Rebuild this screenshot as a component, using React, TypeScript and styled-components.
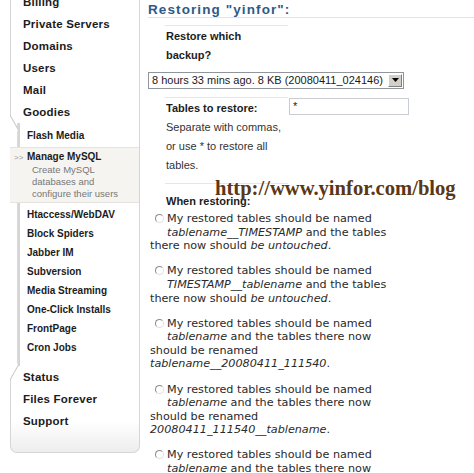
import React from "react";
import styled, { createGlobalStyle } from "styled-components";

const GlobalStyle = createGlobalStyle`
  html, body {
    margin: 0;
    padding: 0;
    background: #fff;
  }
  body {
    font-family: "Liberation Sans", Arial, sans-serif;
    color: #222;
    overflow: hidden;
  }
`;

const Page = styled.div`
  position: relative;
  display: flex;
  align-items: flex-start;
  width: 474px;
  height: 473px;
  overflow: hidden;
`;

const Sidebar = styled.nav`
  flex-shrink: 0;
  width: 128px;
  margin: -9px 0 0 10px;
  padding-bottom: 20px;
  border: 1px solid #d6d6d6;
  border-top: none;
  border-radius: 0 0 7px 7px;
  background: linear-gradient(to bottom, #fff 0, #fff 430px, #ededed 100%);
`;

const MainItem = styled.div`
  height: 22px;
  line-height: 22px;
  padding-left: 12px;
  font-size: 11.5px;
  font-weight: bold;
  letter-spacing: 0.2px;
  color: #1c1c1c;
  white-space: nowrap;
`;

const SubGroup = styled.div`
  position: relative;
  margin-left: -1px;
  padding: 3px 0 9px 17px;
  background: linear-gradient(to right, #fff 7px, #dcdcdc 7px, #d2d2d2 10px, #fff 10px);

  &::before {
    content: "";
    position: absolute;
    left: 0;
    top: -8px;
    width: 9px;
    height: 16px;
    background: linear-gradient(to bottom left, transparent calc(50% - 1px), #c8c8c8 50%, #fff calc(50% + 1px));
  }

  &::after {
    content: "";
    position: absolute;
    left: 0;
    top: calc(100% - 2px);
    width: 9px;
    height: 16px;
    background: linear-gradient(to bottom right, #fff calc(50% - 1px), #c8c8c8 50%, transparent calc(50% + 1px));
  }
`;

const SubItem = styled.div`
  height: 19px;
  line-height: 19px;
  font-size: 10px;
  font-weight: bold;
  color: #1c1c1c;
  white-space: nowrap;
`;

const ActiveItem = styled.div`
  margin: 2px 0 2px -17px;
  padding: 2px 0 2px 4px;
  background: #f6f4f1;
  border-top: 1px solid #e6e3df;
  border-bottom: 1px solid #e6e3df;
`;

const ActiveTitle = styled.div`
  line-height: 13px;
  font-size: 10px;
  font-weight: bold;
  color: #1c1c1c;
  white-space: nowrap;
`;

const Arrows = styled.span`
  display: inline-block;
  width: 13px;
  font-size: 8px;
  font-weight: normal;
  color: #999;
`;

const ActiveDesc = styled.div`
  padding-left: 18px;
  line-height: 12px;
  font-size: 9.5px;
  color: #777;
`;

const Content = styled.main`
  flex: 1;
  margin-left: 8px;
  min-width: 0;
`;

const Heading = styled.h2`
  margin: 2px 0 0;
  line-height: 15px;
  font-size: 13.5px;
  font-weight: bold;
  letter-spacing: 1.1px;
  color: #2d5a87;
  border-bottom: 1px solid #dfe4ea;
`;

const FormRow = styled.div<{ $top: number }>`
  display: flex;
  align-items: flex-start;
  margin: ${(p) => p.$top}px 0 0 17px;
`;

const LabelCell = styled.div<{ $padTop?: number; $padBottom?: number }>`
  width: 123px;
  padding: ${(p) => p.$padTop ?? 1}px 0 ${(p) => p.$padBottom ?? 0}px 1px;
  box-sizing: border-box;
  border-top: 1px solid #e6e6e6;
  font-size: 11px;
  line-height: 19.3px;
  color: #333;
`;

const Label = styled.span`
  font-weight: bold;
  color: #1c1c1c;
`;

const TextBox = styled.div`
  width: 120px;
  height: 17px;
  margin: 1px 0 0 1px;
  box-sizing: border-box;
  border: 1px solid #c9ccd0;
  padding-left: 3px;
  font-size: 11px;
  line-height: 15px;
  color: #222;
`;

const SelectBox = styled.div`
  display: flex;
  align-items: stretch;
  width: 256px;
  height: 17px;
  margin-top: 6px;
  box-sizing: border-box;
  border: 1px solid #8f959c;
  background: #fff;
`;

const SelectText = styled.div`
  flex: 1;
  padding-left: 3px;
  font-size: 11px;
  line-height: 15px;
  color: #1a1a1a;
  white-space: nowrap;
`;

const DropButton = styled.div`
  display: flex;
  align-items: center;
  justify-content: center;
  width: 14px;
  margin: 1px;
  box-sizing: border-box;
  background: #d4d0c8;
  border: 1px solid;
  border-color: #fff #808080 #808080 #fff;
`;

const Options = styled.div`
  margin: 1px 0 0 2px;
  font-family: "DejaVu Sans", Verdana, sans-serif;
  font-size: 11.2px;
  line-height: 13.6px;
  color: #2a2a2a;
`;

const Option = styled.div`
  margin-bottom: 11.5px;
  white-space: nowrap;
`;

const Radio = styled.span`
  display: inline-block;
  width: 9px;
  height: 9px;
  margin: 0 3px 0 5px;
  box-sizing: border-box;
  border: 1px solid;
  border-color: #8a8a8a #e0e0e0 #e0e0e0 #8a8a8a;
  border-radius: 50%;
  vertical-align: -1px;
`;

const Indent = styled.span`
  display: block;
  padding-left: 17px;
`;

const Watermark = styled.div`
  position: absolute;
  left: 215px;
  top: 176px;
  font-family: "Liberation Serif", "Times New Roman", serif;
  font-size: 20.6px;
  font-weight: bold;
  line-height: 24px;
  color: #5a3716;
  white-space: nowrap;
`;

const mainTop = ["Billing", "Private Servers", "Domains", "Users", "Mail", "Goodies"];
const subBefore = ["Flash Media"];
const subAfter = [
  "Htaccess/WebDAV",
  "Block Spiders",
  "Jabber IM",
  "Subversion",
  "Media Streaming",
  "One-Click Installs",
  "FrontPage",
  "Cron Jobs",
];
const mainBottom = ["Status", "Files Forever", "Support"];

const restoreOptions: React.ReactNode[][] = [
  [
    <>
      <i>tablename__TIMESTAMP</i> and the tables
    </>,
    <>
      there now should <i>be untouched</i>.
    </>,
  ],
  [
    <>
      <i>TIMESTAMP__tablename</i> and the tables
    </>,
    <>
      there now should <i>be untouched</i>.
    </>,
  ],
  [
    <>
      <i>tablename</i> and the tables there now
    </>,
    <>should be renamed</>,
    <>
      <i>tablename__20080411_111540</i>.
    </>,
  ],
  [
    <>
      <i>tablename</i> and the tables there now
    </>,
    <>should be renamed</>,
    <>
      <i>20080411_111540__tablename</i>.
    </>,
  ],
  [
    <>
      <i>tablename</i> and the tables there now
    </>,
  ],
];

export default function App() {
  return (
    <Page>
      <GlobalStyle />
      <Sidebar>
        {mainTop.map((item) => (
          <MainItem key={item}>{item}</MainItem>
        ))}
        <SubGroup>
          {subBefore.map((item) => (
            <SubItem key={item}>{item}</SubItem>
          ))}
          <ActiveItem>
            <ActiveTitle>
              <Arrows>&gt;&gt;</Arrows>Manage MySQL
            </ActiveTitle>
            <ActiveDesc>
              Create MySQL
              <br />
              databases and
              <br />
              configure their users
            </ActiveDesc>
          </ActiveItem>
          {subAfter.map((item) => (
            <SubItem key={item}>{item}</SubItem>
          ))}
        </SubGroup>
        {mainBottom.map((item) => (
          <MainItem key={item}>{item}</MainItem>
        ))}
      </Sidebar>

      <Content>
        <Heading>Restoring "yinfor":</Heading>

        <FormRow $top={7}>
          <LabelCell>
            <Label>
              Restore which
              <br />
              backup?
            </Label>
          </LabelCell>
        </FormRow>

        <SelectBox>
          <SelectText>8 hours 33 mins ago. 8 KB (20080411_024146)</SelectText>
          <DropButton>
            <svg width="7" height="4" viewBox="0 0 7 4">
              <path d="M0 0h7L3.5 4z" fill="#000" />
            </svg>
          </DropButton>
        </SelectBox>

        <FormRow $top={8}>
          <LabelCell $padBottom={7}>
            <Label>Tables to restore:</Label>
            <br />
            Separate with commas, or use * to restore all tables.
          </LabelCell>
          <TextBox>*</TextBox>
        </FormRow>

        <FormRow $top={0}>
          <LabelCell $padTop={8}>
            <Label>When restoring:</Label>
          </LabelCell>
        </FormRow>

        <Options>
          {restoreOptions.map((lines, i) => (
            <Option key={i}>
              <Radio />
              My restored tables should be named
              <Indent>{lines[0]}</Indent>
              {lines.slice(1).map((line, j) => (
                <div key={j}>{line}</div>
              ))}
            </Option>
          ))}
        </Options>
      </Content>

      <Watermark>http://www.yinfor.com/blog</Watermark>
    </Page>
  );
}
